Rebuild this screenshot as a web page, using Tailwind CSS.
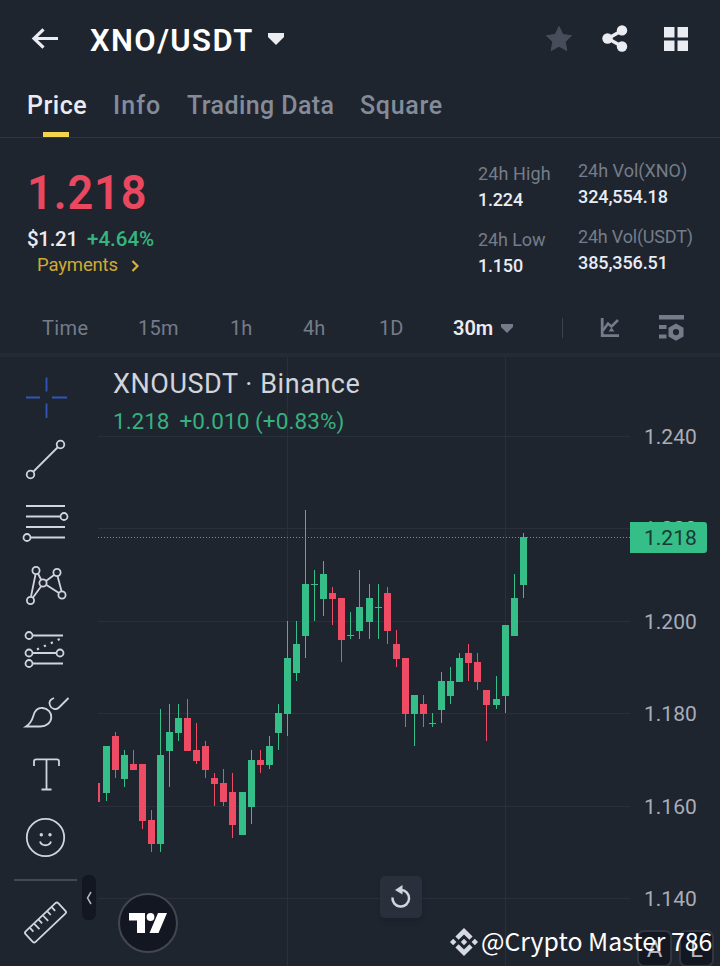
<!DOCTYPE html>
<html lang="en">
  <head>
    <meta charset="UTF-8" />
    <meta name="viewport" content="width=device-width, initial-scale=1.0" />
    <title>XNO/USDT</title>
    <script src="https://cdn.jsdelivr.net/npm/@tailwindcss/browser@4"></script>
  </head>

  <body class="w-[720px] h-[966px] overflow-hidden bg-[#1f252f] font-['Roboto',sans-serif] text-[#eaecf2] whitespace-nowrap flex flex-col">
    <!-- Header -->
    <header class="h-[78px] shrink-0 flex items-center pl-[31px] pr-[32px]">
      <svg class="w-[28px] h-[22px]" viewBox="0 0 28 22" fill="none" stroke="#eaecf2" stroke-width="3.2">
        <path d="M27 10.500H3M12.500 1.300L3 10.500l9.500 9.200" />
      </svg>
      <h1 class="ml-[31px] w-[177px] text-[31px] leading-none font-semibold tracking-[1.4px] text-white pt-[3px]">XNO/USDT</h1>
      <svg class="w-[18px] h-[14px]" viewBox="0 0 18 14"><path d="M1 1h16v4L9 13 1 5z" fill="#eaecf2" /></svg>
      <div class="ml-auto flex items-center">
        <svg class="w-[28px] h-[28px]" viewBox="0 0 28 28">
          <path d="M14 1.500l3.800 8 8.700 1.200-6.300 6.100 1.600 8.700-7.800-4.200-7.800 4.200 1.600-8.700L1.500 10.700l8.700-1.200z" fill="#474d5b" stroke="#474d5b" stroke-linejoin="round" />
        </svg>
        <svg class="ml-[28px] w-[28px] h-[28px]" viewBox="0 0 28 28" fill="#eaecf2">
          <path d="M7 13.500l14-8M7 13.500l14 8" stroke="#eaecf2" stroke-width="3.400" />
          <circle cx="6.500" cy="13.500" r="5.200" /><circle cx="21" cy="5.400" r="5.200" /><circle cx="21" cy="21.500" r="5.200" />
        </svg>
        <svg class="ml-[35px] w-[24px] h-[24px]" viewBox="0 0 24 24" fill="#eaecf2">
          <path d="M0 0h10.500v10.500H0zM13.500 0H24v10.500H13.500zM0 13.500h10.500V24H0zM13.500 13.500H24V24H13.500z" />
        </svg>
      </div>
    </header>

    <!-- Tabs -->
    <nav class="h-[60px] shrink-0 flex border-b border-[#2f3641] pl-[27px] text-[25px] font-medium leading-[56px] text-[#848b99]">
      <div class="w-[86px] flex flex-col text-[#eaecf2]">
        <span class="h-[54px] tracking-[0.5px]">Price</span>
        <span class="ml-[16px] w-[26px] h-[5px] bg-[#f3d44c]"></span>
      </div>
      <span class="w-[74px] tracking-[1.1px]">Info</span>
      <span class="w-[173px] tracking-[0.4px]">Trading Data</span>
      <span class="tracking-[0.7px]">Square</span>
    </nav>

    <!-- Ticker -->
    <section class="h-[162px] shrink-0 flex pl-[27px]">
      <div class="w-[451px] pt-[28px]">
        <div class="h-[59px] leading-[54px] text-[49px] font-semibold tracking-[1px] origin-left scale-x-[.92] text-[#e9485f]">1.218</div>
        <div class="flex h-[28px] items-center text-[20.500px] font-medium">
          <span class="w-[60px] tracking-[-0.3px]">$1.21</span>
          <span class="text-[#35b57f]">+4.64%</span>
        </div>
        <div class="flex h-[26px] items-center pl-[10px] text-[18.500px] text-[#d0aa32]">
          <span class="w-[94px] tracking-[-0.15px]">Payments</span>
          <svg class="w-[8px] h-[12px]" viewBox="0 0 8 12" fill="none" stroke="#d9b13a" stroke-width="2.200"><path d="M1.500 1l5 5-5 5" /></svg>
        </div>
      </div>
      <dl class="w-[100px] pt-[23px] text-[18px] leading-[26px] text-[#757c89]">
        <dt class="tracking-[0.1px]">24h High</dt>
        <dd class="mb-[14px] font-medium tracking-[-0.2px] text-[#eaecf2]">1.224</dd>
        <dt class="tracking-[-0.1px]">24h Low</dt>
        <dd class="font-medium tracking-[-0.2px] text-[#eaecf2]">1.150</dd>
      </dl>
      <dl class="pt-[20px] text-[18px] leading-[26px] text-[#757c89]">
        <dt>24h Vol(XNO)</dt>
        <dd class="mb-[14px] font-medium tracking-[-0.1px] text-[#eaecf2]">324,554.18</dd>
        <dt class="tracking-[-0.2px]">24h Vol(USDT)</dt>
        <dd class="font-medium tracking-[-0.1px] text-[#eaecf2]">385,356.51</dd>
      </dl>
    </section>

    <!-- Intervals -->
    <nav class="h-[57px] shrink-0 flex items-center border-b-4 border-[#252b35] pt-[3px] pl-[42px] pr-[35px] text-[20px] text-[#757c89]">
      <span class="w-[96px] tracking-[0.4px]">Time</span>
      <span class="w-[92px] tracking-[0.2px]">15m</span>
      <span class="w-[73px]">1h</span>
      <span class="w-[76px]">4h</span>
      <span class="w-[74px]">1D</span>
      <span class="w-[48px] font-semibold text-[#eaecf2]">30m</span>
      <svg class="w-[12px] h-[9px]" viewBox="0 0 12 9"><path d="M0 0h12v3L6 9 0 3z" fill="#757c89" /></svg>
      <span class="ml-[49px] w-px h-[20px] bg-[#3b424e]"></span>
      <svg class="ml-[37px] w-[20px] h-[20px]" viewBox="0 0 20 20" fill="none" stroke="#757c89" stroke-width="2.800">
        <path d="M2.200 0v17.700H19" /><path d="M3 12.500L8 5.500l3.500 3L18 2" stroke-width="2.500" /><path d="M8.500 13.500L11.500 9.500l3 4z" fill="#757c89" stroke="none" />
      </svg>
      <svg class="ml-auto w-[26px] h-[26px]" viewBox="0 0 26 26" fill="#757c89">
        <path d="M0 0h25v4.500H0zM0 10h7.500v4H0zM0 19.500h7.500v4H0z" />
        <path fill-rule="evenodd" d="M17 8.500l7.500 4.300v8.600L17 25.700l-7.500-4.300v-8.600zM17 14a3.100 3.100 0 100 6.200 3.100 3.100 0 000-6.200z" />
      </svg>
    </nav>

    <main class="relative h-[609px] flex">
      <!-- Drawing tools -->
      <svg class="w-[98px] h-[609px] shrink-0" viewBox="0 357 98 609" fill="none" stroke="#d1d4dc" stroke-width="1.800">
        <path d="M46.500 377.500v14M46.500 403.500v14.500M26 397.500h14M52 397.500h15" stroke="#3156b8" />
        <path d="M33 472l25-25" /><circle cx="30.500" cy="474.500" r="3.800" /><circle cx="60.500" cy="444.500" r="3.800" />
        <path d="M26 506h39M26 516.500h34M26 527h39M31 537.500h34" /><circle cx="64" cy="516.500" r="3.500" /><circle cx="27" cy="537.500" r="3.500" />
        <path d="M31 596.500l4.500-22M38 573.500l3 6M33 597.500l8-11M46 581l8-6M46.500 585l12.500 8M57.500 576l4 15" />
        <circle cx="36" cy="570.500" r="3.600" /><circle cx="57" cy="572.500" r="3.600" /><circle cx="43" cy="583" r="3.600" /><circle cx="30.500" cy="600.500" r="3.600" /><circle cx="62" cy="595" r="3.600" />
        <path d="M33 635.500h30M33 653h23M33 663.500h30" /><path d="M37 649.500L62 638" stroke-width="2.200" stroke-dasharray="2.200 5.400" />
        <circle cx="29" cy="635.500" r="3.500" /><circle cx="29" cy="653" r="3.500" /><circle cx="60" cy="653" r="3.500" /><circle cx="29" cy="663.500" r="3.500" />
        <path d="M26 726.500c4-2.500 6-6 7.500-11 1.500-5.200 5-7.800 9-7.500 5.500.4 9.200 5 8.800 9.500-.5 5.500-5 9-11 9zM54 698c-4 1.500-5.500 4-4 7.500 1.500 3.800 6 4.800 9 2l9.500-9.500" />
        <path d="M34 766v-4.500q0-2.200 2.200-2.200h20.600q2.200 0 2.200 2.200v4.500M46.500 759.500v30M41.500 789.500h10" />
        <circle cx="45.500" cy="837.500" r="18.700" /><path d="M40 841.500c1.500 5 9.500 5 11 0" /><circle cx="41.300" cy="834.700" r="1.700" fill="#d1d4dc" stroke="none" /><circle cx="50" cy="834.700" r="1.700" fill="#d1d4dc" stroke="none" />
        <path d="M14 880h63" stroke="#434a56" stroke-width="2" />
        <g transform="translate(45.500 922.500) rotate(-43.500)"><rect x="-22.500" y="-7.200" width="45" height="14.400" rx="2" /><path d="M-15-6.800v5M-9-6.800v7.500M-3-6.800v5M3-6.800v7.500M9-6.800v5M15-6.800v5" /></g>
      </svg>

      <!-- Chart -->
      <svg id="chart" class="w-[532px] h-[609px] shrink-0" viewBox="98 357 532 609" shape-rendering="crispEdges">
        <path d="M98 436.500h532M98 528.500h532M98 621.500h532M98 713.500h532M98 806.500h532M98 898.500h532M287.500 357v609M505.500 357v609" stroke="#2a303b" />
        <path d="M98 537.500h532" stroke="#3fae8a" stroke-dasharray="1 2" />
        <g id="candles"></g>
      </svg>

      <div class="absolute left-[113px] top-[10px]">
        <div class="text-[27px] tracking-[0.55px] leading-[34px] text-[#d1d4dc]">XNOUSDT · Binance</div>
        <div class="mt-[4px] flex text-[22.500px] leading-[33px] text-[#36b17f]"><span class="w-[66.500px]">1.218</span><span class="tracking-[0.1px]">+0.010 (+0.83%)</span></div>
      </div>

      <!-- Price scale, one label each 0.020 -->
      <div class="pt-[64px] pl-[14px] flex flex-col text-[21px] leading-[32px] text-[#a9adb8]">
        <span class="h-[92.400px]">1.240</span>
        <span class="h-[92.400px]">1.220</span>
        <span class="h-[92.400px]">1.200</span>
        <span class="h-[92.400px]">1.180</span>
        <span class="h-[92.400px]">1.160</span>
        <span>1.140</span>
      </div>
      <div class="absolute left-[630px] top-[165px] w-[77px] h-[31px] rounded-r-[3px] bg-[#35be87] pl-[14px] text-[21px] leading-[32px] text-[#1b3834]">1.218</div>

      <div class="absolute left-[82px] top-[518px] w-[14px] h-[45px] rounded-[6px] bg-[#131722] flex items-center justify-center">
        <svg class="w-[6px] h-[14px]" viewBox="0 0 6 14" fill="none" stroke="#b2b5be" stroke-width="1.500"><path d="M5 1L1.500 7 5 13" /></svg>
      </div>

      <div class="absolute left-[118px] top-[536px] w-[60px] h-[60px] rounded-full border-2 border-[#434651] bg-[#131722] flex items-center justify-center">
        <svg class="w-[38px] h-[20px]" viewBox="0 0 38 20" fill="#fff"><path d="M0 0h16v20H8V7.500H0zM29 0h9l-8.500 20h-9z" /><circle cx="21.500" cy="4" r="3.900" /></svg>
      </div>

      <div class="absolute left-[380px] top-[519px] w-[42px] h-[42px] rounded-[5px] bg-[#2a303b] shadow-md flex items-center justify-center">
        <svg class="w-[22px] h-[24px]" viewBox="0 0 22 24" fill="none" stroke="#d1d4dc" stroke-width="2.500"><path d="M2.500 12.500a8.300 8.300 0 108.500-7.500H9" /><path d="M12.500 0v9.500L5 5z" fill="#d1d4dc" stroke="none" /></svg>
      </div>

      <div class="absolute left-[637px] top-[573px] flex gap-[7px] text-center text-[24px] leading-[34px] text-[#b2b5be]">
        <span class="w-[35px] h-[37px] rounded-[7px] border-2 border-[#30353f] bg-[#131722]">A</span>
        <span class="w-[35px] h-[37px] rounded-[7px] border-2 border-[#30353f] bg-[#131722]">L</span>
      </div>

      <!-- Author mark -->
      <div class="absolute left-[450px] top-[568px] h-[34px] flex items-center font-['Noto_Sans_CJK_SC',sans-serif] text-[24.800px] text-white">
        <svg class="w-[28px] h-[28px] mr-[3px]" viewBox="0 0 28 28" fill="#d6d8e3">
          <path d="M14 0l8.600 8.600-3.200 3.200L14 6.400l-5.400 5.400-3.200-3.200zM14 28l8.600-8.600-3.200-3.200L14 21.600l-5.400-5.400-3.200 3.200zM14 10.800l3.200 3.200-3.200 3.200-3.200-3.200zM3.200 10.800L6.400 14l-3.200 3.200L0 14zM24.800 10.800L28 14l-3.200 3.200-3.200-3.200z" />
        </svg>
        <span class="-mt-[3px]">@Crypto Master 786</span>
      </div>
    </main>

    <script>
      // left, body top, body bottom, wick top, wick bottom, up
      const candles = [
        [93, 783, 802, 783, 802, 0], [103, 746, 793, 746, 801, 1], [112, 736, 770, 732, 778, 0], [121, 755, 779, 750, 787, 1],
        [130, 764, 770, 750, 770, 0], [139, 764, 821, 764, 829, 0], [148, 820, 844, 810, 852, 0], [157, 755, 844, 709, 852, 1],
        [166, 732, 751, 704, 787, 1], [175, 718, 733, 704, 741, 1], [184, 718, 751, 699, 751, 0], [193, 750, 761, 723, 764, 0],
        [202, 746, 770, 741, 778, 0], [211, 778, 784, 773, 806, 0], [220, 783, 802, 769, 806, 0], [229, 792, 825, 773, 838, 0],
        [239, 792, 835, 792, 835, 1], [248, 760, 807, 750, 824, 1], [257, 760, 765, 750, 773, 0], [266, 746, 765, 736, 769, 1],
        [275, 713, 733, 704, 750, 1], [284, 658, 714, 621, 736, 1], [293, 644, 673, 621, 681, 1], [302, 584, 636, 510, 658, 1],
        [311, 584, 585, 570, 621, 1], [320, 574, 599, 561, 616, 1], [329, 593, 599, 587, 625, 0], [338, 598, 640, 598, 662, 0],
        [347, 635, 636, 612, 639, 1], [356, 607, 631, 570, 639, 1], [366, 598, 622, 584, 639, 1], [375, 607, 608, 584, 639, 1],
        [384, 593, 631, 587, 644, 0], [393, 644, 659, 630, 667, 0], [402, 658, 714, 658, 727, 0], [411, 695, 714, 695, 746, 1],
        [420, 704, 714, 695, 727, 0], [429, 723, 724, 713, 727, 1], [438, 681, 710, 672, 723, 1], [447, 681, 696, 667, 704, 1],
        [456, 658, 682, 653, 682, 1], [465, 653, 663, 644, 681, 0], [474, 662, 682, 653, 690, 0], [483, 690, 705, 690, 741, 0],
        [493, 699, 705, 676, 709, 1], [502, 625, 696, 625, 713, 1], [511, 598, 636, 574, 636, 1], [520, 537, 585, 533, 598, 1],
      ];
      document.getElementById("candles").innerHTML = candles
        .map(([x, top, bottom, high, low, up]) => {
          const color = up ? "#35be87" : "#ef4b64";
          return `<g fill="${color}"><rect x="${x + 3}" y="${high}" width="1" height="${low - high}" /><rect x="${x}" y="${top}" width="7" height="${bottom - top}" /></g>`;
        })
        .join("");
    </script>
  </body>
</html>
